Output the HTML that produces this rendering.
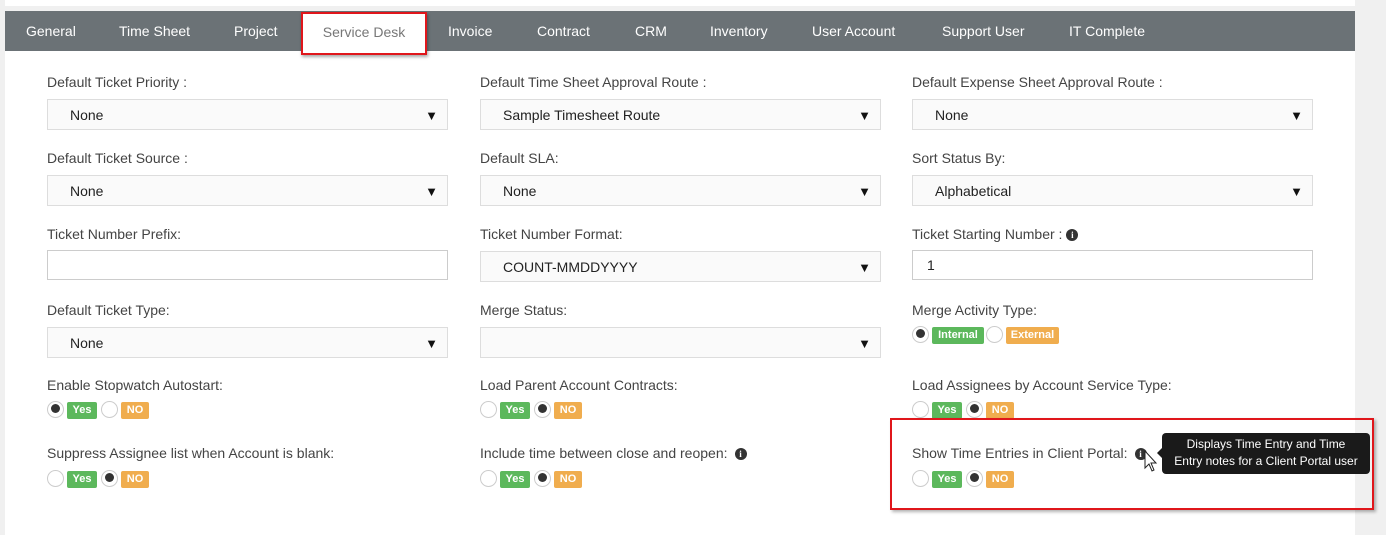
<!DOCTYPE html>
<html><head><style>
*{box-sizing:border-box;margin:0;padding:0}
body{width:1386px;height:535px;background:#f0f0f0;font-family:"Liberation Sans",sans-serif;position:relative;overflow:hidden;color:#444}
.main{position:absolute;left:5px;top:11px;width:1350px;height:524px;background:#fff}
.topw{position:absolute;left:5px;top:0;width:1350px;height:6px;background:#fff}
.bar{position:absolute;left:5px;top:11px;width:1350px;height:40px;background:#6b7276}
.tab{position:absolute;top:23px;color:#fff;font-size:14px}
.sd{position:absolute;left:301px;top:12px;width:126px;height:43px;background:#fff;border:2px solid #e0161b;box-shadow:1px 2px 3px rgba(0,0,0,.35);color:#777;font-size:14px;text-align:center;padding-top:10px}
.lbl{position:absolute;font-size:14px;color:#444}
.sel{position:absolute;width:401px;height:31px;border:1px solid #ddd;background:#fafafa;font-size:14px;color:#222;padding:7px 0 0 22px}
.sel::after{content:"▼";position:absolute;right:9px;top:8px;font-size:13px;color:#111}
.inp{position:absolute;width:401px;height:30px;border:1px solid #ccc;background:#fff;font-size:14px;padding:6px 0 0 14px;color:#222}
.r{position:absolute;width:17px;height:17px;border-radius:50%;border:1px solid #ccc;background:#fff}
.r.on::after{content:"";position:absolute;left:3px;top:2px;width:9px;height:9px;border-radius:50%;background:#333}
.b{position:absolute;height:17px;border-radius:2px;color:#fff;font-size:11px;font-weight:bold;text-align:center;line-height:17px}
.y{background:#5cb85c;width:30px}.n{background:#f0ad4e;width:28px}
.info{display:inline-block;width:12px;height:12px;border-radius:50%;background:#333;color:#fff;font-size:9px;font-weight:bold;text-align:center;line-height:12px;vertical-align:1px;margin-left:4px;font-family:"Liberation Serif",serif}
</style></head><body>
<div class="topw"></div>
<div class="main"></div>
<div class="bar"></div>
<div class="tab" style="left:26px">General</div>
<div class="tab" style="left:119px">Time Sheet</div>
<div class="tab" style="left:234px">Project</div>
<div class="sd">Service Desk</div>
<div class="tab" style="left:448px">Invoice</div>
<div class="tab" style="left:537px">Contract</div>
<div class="tab" style="left:635px">CRM</div>
<div class="tab" style="left:710px">Inventory</div>
<div class="tab" style="left:812px">User Account</div>
<div class="tab" style="left:942px">Support User</div>
<div class="tab" style="left:1069px">IT Complete</div>

<div class="lbl" style="left:47px;top:74px">Default Ticket Priority :</div>
<div class="sel" style="left:47px;top:99px">None</div>
<div class="lbl" style="left:480px;top:74px">Default Time Sheet Approval Route :</div>
<div class="sel" style="left:480px;top:99px">Sample Timesheet Route</div>
<div class="lbl" style="left:912px;top:74px">Default Expense Sheet Approval Route :</div>
<div class="sel" style="left:912px;top:99px">None</div>

<div class="lbl" style="left:47px;top:150px">Default Ticket Source :</div>
<div class="sel" style="left:47px;top:175px">None</div>
<div class="lbl" style="left:480px;top:150px">Default SLA:</div>
<div class="sel" style="left:480px;top:175px">None</div>
<div class="lbl" style="left:912px;top:150px">Sort Status By:</div>
<div class="sel" style="left:912px;top:175px">Alphabetical</div>

<div class="lbl" style="left:47px;top:226px">Ticket Number Prefix:</div>
<div class="inp" style="left:47px;top:250px"></div>
<div class="lbl" style="left:480px;top:226px">Ticket Number Format:</div>
<div class="sel" style="left:480px;top:251px">COUNT-MMDDYYYY</div>
<div class="lbl" style="left:912px;top:226px">Ticket Starting Number :<span class="info">i</span></div>
<div class="inp" style="left:912px;top:250px">1</div>

<div class="lbl" style="left:47px;top:302px">Default Ticket Type:</div>
<div class="sel" style="left:47px;top:327px">None</div>
<div class="lbl" style="left:480px;top:302px">Merge Status:</div>
<div class="sel" style="left:480px;top:327px"></div>
<div class="lbl" style="left:912px;top:302px">Merge Activity Type:</div>
<div class="r on" style="left:912px;top:326px"></div><div class="b y" style="left:932px;top:327px;width:52px">Internal</div>
<div class="r" style="left:986px;top:326px"></div><div class="b n" style="left:1006px;top:327px;width:53px">External</div>

<div class="lbl" style="left:47px;top:377px">Enable Stopwatch Autostart:</div>
<div class="r on" style="left:47px;top:401px"></div><div class="b y" style="left:67px;top:402px">Yes</div>
<div class="r" style="left:101px;top:401px"></div><div class="b n" style="left:121px;top:402px">NO</div>
<div class="lbl" style="left:480px;top:377px">Load Parent Account Contracts:</div>
<div class="r" style="left:480px;top:401px"></div><div class="b y" style="left:500px;top:402px">Yes</div>
<div class="r on" style="left:534px;top:401px"></div><div class="b n" style="left:554px;top:402px">NO</div>
<div class="lbl" style="left:912px;top:377px">Load Assignees by Account Service Type:</div>
<div class="r" style="left:912px;top:401px"></div><div class="b y" style="left:932px;top:402px">Yes</div>
<div class="r on" style="left:966px;top:401px"></div><div class="b n" style="left:986px;top:402px">NO</div>

<div class="lbl" style="left:47px;top:445px">Suppress Assignee list when Account is blank:</div>
<div class="r" style="left:47px;top:470px"></div><div class="b y" style="left:67px;top:471px">Yes</div>
<div class="r on" style="left:101px;top:470px"></div><div class="b n" style="left:121px;top:471px">NO</div>
<div class="lbl" style="left:480px;top:445px">Include time between close and reopen:<span class="info" style="margin-left:7px">i</span></div>
<div class="r" style="left:480px;top:470px"></div><div class="b y" style="left:500px;top:471px">Yes</div>
<div class="r on" style="left:534px;top:470px"></div><div class="b n" style="left:554px;top:471px">NO</div>

<div style="position:absolute;left:890px;top:418px;width:484px;height:92px;border:2px solid #e0161b;box-shadow:2px 2px 3px rgba(0,0,0,.3)"></div>
<div class="lbl" style="left:912px;top:445px">Show Time Entries in Client Portal:<span class="info" style="margin-left:7px">i</span></div>
<div class="r" style="left:912px;top:470px"></div><div class="b y" style="left:932px;top:471px">Yes</div>
<div class="r on" style="left:966px;top:470px"></div><div class="b n" style="left:986px;top:471px">NO</div>
<div style="position:absolute;left:1162px;top:433px;width:208px;height:41px;background:#1a1a1a;border-radius:4px;color:#fff;font-size:12px;text-align:center;line-height:17px;padding-top:3px">Displays Time Entry and Time<br>Entry notes for a Client Portal user</div>
<div style="position:absolute;left:1157px;top:448px;width:0;height:0;border-top:5px solid transparent;border-bottom:5px solid transparent;border-right:5px solid #1a1a1a"></div>
<svg style="position:absolute;left:1144px;top:450px" width="14" height="24" viewBox="0 0 14 24"><path d="M1 1 L1 18 L5 14 L8 21 L10 20 L7 13 L12 13 Z" fill="#fff" stroke="#222" stroke-width="1"/></svg>
</body></html>
